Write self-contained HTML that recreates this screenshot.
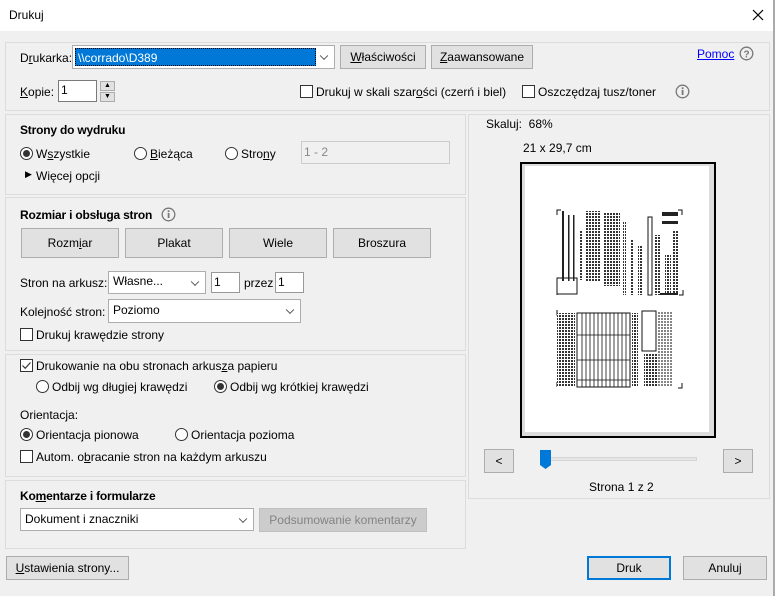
<!DOCTYPE html>
<html><head><meta charset="utf-8"><style>
*{box-sizing:border-box;margin:0;padding:0}
body{width:775px;height:596px;background:#f0f0f0;font-family:"Liberation Sans",sans-serif;font-size:12px;color:#000;position:relative;overflow:hidden}
.a{position:absolute;white-space:nowrap}
.g{position:absolute;border:1px solid #dcdcdc}
.btn{position:absolute;background:#e1e1e1;border:1px solid #adadad;text-align:center;line-height:22px}
.in{position:absolute;background:#fff;border:1px solid #7a7a7a;padding-left:2px;line-height:18px}
.sel{position:absolute;background:#fff;border:1px solid #adadad;padding-left:4px}
.sel:after{content:"";position:absolute;right:7px;top:50%;width:5px;height:5px;border-right:1px solid #555;border-bottom:1px solid #555;transform:translateY(-70%) rotate(45deg)}
.cb{position:absolute;width:13px;height:13px;border:1px solid #333;background:#fff}
.rb{position:absolute;width:13px;height:13px;border:1px solid #333;border-radius:50%;background:#fff}
.rb.on:after{content:"";position:absolute;left:2px;top:2px;width:7px;height:7px;border-radius:50%;background:#333}
b{font-weight:bold;letter-spacing:-0.2px}
u{text-decoration:underline}
</style></head><body>
<div class="a" style="left:0;top:0;width:775px;height:31px;background:#fff"></div>
<div class="a" style="left:773px;top:0;width:2px;height:596px;background:#aaa"></div>
<div class="a" style="left:9px;top:8px;font-size:12px">Drukuj</div>
<svg class="a" style="left:752px;top:9px" width="12" height="12"><path d="M1 1L11 11M11 1L1 11" stroke="#000" stroke-width="1.2"/></svg>

<div class="g" style="left:5px;top:42px;width:765px;height:69px"></div>
<div class="a" style="left:20px;top:51px">D<u>r</u>ukarka:</div>
<div class="sel" style="left:72px;top:45px;width:263px;height:24px"><div style="position:absolute;left:2px;top:2px;width:241px;height:18px;background:#0078d7;color:#fff;line-height:18px;padding-left:2px;border:1px dotted #000">\\corrado\D389</div></div>
<div class="btn" style="left:340px;top:45px;width:86px;height:24px"><u>W</u>łaściwości</div>
<div class="btn" style="left:431px;top:45px;width:102px;height:24px"><u>Z</u>aawansowane</div>
<div class="a" style="left:697px;top:47px;color:#00f;text-decoration:underline">Pomoc</div>
<svg class="a" style="left:739px;top:46px" width="15" height="15"><circle cx="7.5" cy="7.5" r="6.3" fill="none" stroke="#777" stroke-width="1.3"/><text x="7.5" y="11.3" font-size="10" font-family="Liberation Sans" text-anchor="middle" fill="#777" font-weight="bold">?</text></svg>
<div class="a" style="left:20px;top:85px"><u>K</u>opie:</div>
<div class="in" style="left:58px;top:80px;width:39px;height:22px">1</div>
<div class="btn" style="left:100px;top:81px;width:15px;height:10px;line-height:8px;font-size:7px">▲</div>
<div class="btn" style="left:100px;top:92px;width:15px;height:10px;line-height:8px;font-size:7px">▼</div>
<div class="cb" style="left:300px;top:85px"></div>
<div class="a" style="left:316px;top:85px">Drukuj w skali szar<u>o</u>ści (czerń i biel)</div>
<div class="cb" style="left:522px;top:85px"></div>
<div class="a" style="left:538px;top:85px">Oszczędzaj tusz/toner</div>
<svg class="a" style="left:675px;top:84px" width="15" height="15"><circle cx="7.5" cy="7.5" r="6.3" fill="none" stroke="#777" stroke-width="1.3"/><rect x="6.7" y="6" width="1.8" height="5" fill="#777"/><rect x="6.7" y="3.3" width="1.8" height="1.8" fill="#777"/></svg>

<div class="g" style="left:5px;top:114px;width:461px;height:81px"></div>
<div class="a" style="left:20px;top:123px"><b>Strony do wydruku</b></div>
<div class="rb on" style="left:20px;top:147px"></div><div class="a" style="left:36px;top:147px">W<u>s</u>zystkie</div>
<div class="rb" style="left:134px;top:147px"></div><div class="a" style="left:150px;top:147px"><u>B</u>ieżąca</div>
<div class="rb" style="left:225px;top:147px"></div><div class="a" style="left:241px;top:147px">Stro<u>n</u>y</div>
<div class="in" style="left:301px;top:141px;width:149px;height:23px;border-color:#ccc;background:#f0f0f0;color:#888;line-height:21px">1 - 2</div>
<div class="a" style="left:25px;top:169px;font-size:9px">▶</div><div class="a" style="left:36px;top:169px">Więcej opcji</div>

<div class="g" style="left:5px;top:197px;width:461px;height:154px"></div>
<div class="a" style="left:20px;top:208px"><b>Rozmiar i obsługa stron</b></div>
<svg class="a" style="left:161px;top:207px" width="15" height="15"><circle cx="7.5" cy="7.5" r="6.3" fill="none" stroke="#777" stroke-width="1.3"/><rect x="6.7" y="6" width="1.8" height="5" fill="#777"/><rect x="6.7" y="3.3" width="1.8" height="1.8" fill="#777"/></svg>
<div class="btn" style="left:21px;top:228px;width:98px;height:30px;line-height:28px">Rozm<u>i</u>ar</div>
<div class="btn" style="left:125px;top:228px;width:98px;height:30px;line-height:28px">Plakat</div>
<div class="btn" style="left:229px;top:228px;width:98px;height:30px;line-height:28px">Wiele</div>
<div class="btn" style="left:333px;top:228px;width:98px;height:30px;line-height:28px">Broszura</div>
<div class="a" style="left:20px;top:276px">Stron na arkusz:</div>
<div class="sel" style="left:108px;top:271px;width:98px;height:23px;line-height:19px;background:#fff">Własne...</div>
<div class="in" style="left:211px;top:272px;width:29px;height:21px;border-color:#999">1</div>
<div class="a" style="left:244px;top:276px">przez</div>
<div class="in" style="left:275px;top:272px;width:29px;height:21px;border-color:#999">1</div>
<div class="a" style="left:20px;top:305px">Kolejność stron:</div>
<div class="sel" style="left:108px;top:299px;width:193px;height:24px;line-height:21px">Poziomo</div>
<div class="cb" style="left:20px;top:328px"></div><div class="a" style="left:36px;top:328px">Drukuj krawędzie strony</div>

<div class="g" style="left:5px;top:354px;width:461px;height:123px"></div>
<div class="cb" style="left:20px;top:359px"></div>
<svg class="a" style="left:21px;top:360px" width="11" height="11"><path d="M1.5 5.5L4.2 8.3L9.5 2.5" stroke="#333" stroke-width="1.2" fill="none"/></svg>
<div class="a" style="left:36px;top:359px">Drukowanie na obu stronach arkus<u>z</u>a papieru</div>
<div class="rb" style="left:36px;top:380px"></div><div class="a" style="left:52px;top:380px">Odbij w<u>g</u> długiej krawędzi</div>
<div class="rb on" style="left:214px;top:380px"></div><div class="a" style="left:230px;top:380px">Odbij wg krótkiej krawędzi</div>
<div class="a" style="left:20px;top:408px">Orientacja:</div>
<div class="rb on" style="left:20px;top:428px"></div><div class="a" style="left:36px;top:428px">Orientacja pionowa</div>
<div class="rb" style="left:175px;top:428px"></div><div class="a" style="left:191px;top:428px">Orientacja pozioma</div>
<div class="cb" style="left:20px;top:450px"></div><div class="a" style="left:36px;top:450px">Autom. o<u>b</u>racanie stron na każdym arkuszu</div>

<div class="g" style="left:5px;top:480px;width:461px;height:69px"></div>
<div class="a" style="left:20px;top:489px"><b>Ko<u>m</u>entarze i formularze</b></div>
<div class="sel" style="left:20px;top:508px;width:234px;height:23px;line-height:20px">Dokument i znaczniki</div>
<div class="btn" style="left:259px;top:508px;width:168px;height:24px;background:#cccccc;border-color:#bfbfbf;color:#838383">Podsumowanie komentarzy</div>

<div class="btn" style="left:6px;top:556px;width:123px;height:24px"><u>U</u>stawienia strony...</div>
<div class="btn" style="left:587px;top:556px;width:84px;height:24px;border:2px solid #0078d7;line-height:20px">Druk</div>
<div class="btn" style="left:683px;top:556px;width:84px;height:24px">Anuluj</div>

<div class="g" style="left:468px;top:114px;width:302px;height:385px"></div>
<div class="a" style="left:486px;top:117px">Skaluj:&nbsp; 68%</div>
<div class="a" style="left:523px;top:141px">21 x 29,7 cm</div>
<div class="a" style="left:520px;top:162px;width:196px;height:276px;border:2px solid #000;background:#ddd"></div>
<div class="a" style="left:525px;top:166px;width:184px;height:266px;background:#fff"></div>
<svg class="a" style="left:520px;top:195px" width="180" height="200" viewBox="0 0 180 200">
<defs>
<pattern id="p" width="3" height="3" patternUnits="userSpaceOnUse"><rect width="3" height="3" fill="#fff"/><rect width="2" height="2" fill="#333"/></pattern>
</defs>
<g fill="none" stroke="#111" stroke-width="1">
<path d="M37 20V15h4M37 95v5M158 15h4v5M159 100h4v-5M37 115v5h4M37 192v-5M158 193h4v-5"/>
<rect x="37" y="83" width="20" height="16"/>
<rect x="128" y="22" width="4" height="78"/>
<rect x="57" y="118" width="53" height="74"/>
<rect x="122" y="116" width="14" height="40"/>
</g>
<g>
<rect x="66" y="16" width="14" height="70" fill="url(#p)"/>
<rect x="84" y="17" width="16" height="74" fill="url(#p)"/>
<rect x="42" y="16" width="2" height="70" fill="#222"/><rect x="48" y="20" width="1.5" height="66" fill="#222"/><rect x="53" y="20" width="1.5" height="66" fill="#222"/>
<rect x="60" y="35" width="3" height="50" fill="url(#p)"/>
<rect x="103" y="26" width="3" height="74" fill="url(#p)"/>
<rect x="110" y="45" width="3" height="55" fill="url(#p)"/>
<rect x="118" y="50" width="4" height="50" fill="url(#p)"/>
<rect x="135" y="40" width="6" height="60" fill="url(#p)"/>
<rect x="145" y="60" width="6" height="40" fill="url(#p)"/>
<rect x="153" y="35" width="5" height="65" fill="url(#p)"/>
<rect x="142" y="17" width="16" height="4" fill="#222"/><rect x="142" y="26" width="16" height="3" fill="#222"/>
<rect x="140" y="98" width="18" height="2" fill="#222"/>
<rect x="37" y="118" width="18" height="74" fill="url(#p)"/>
<rect x="112" y="118" width="6" height="74" fill="url(#p)"/>
<rect x="124" y="158" width="14" height="34" fill="url(#p)"/>
<rect x="138" y="116" width="14" height="76" fill="url(#p)" opacity=".6"/>
</g>
<g stroke="#111" stroke-width=".8">
<path d="M62 118v74M66 118v74M70 118v74M74 118v74M78 118v74M82 118v74M86 118v74M90 118v74M94 118v74M98 118v74M102 118v74M106 118v74M57 140h53M57 165h53M57 185h53"/>
</g>
</svg>
<div class="btn" style="left:484px;top:449px;width:30px;height:24px">&lt;</div>
<div class="btn" style="left:723px;top:449px;width:30px;height:24px">&gt;</div>
<div class="a" style="left:548px;top:457px;width:149px;height:4px;background:#e5e5e5;border:1px solid #d5d5d5"></div>
<svg class="a" style="left:540px;top:450px" width="12" height="20"><path d="M0 0H11V15L5.5 19L0 15Z" fill="#0078d7"/></svg>
<div class="a" style="left:589px;top:480px">Strona 1 z 2</div>
</body></html>
